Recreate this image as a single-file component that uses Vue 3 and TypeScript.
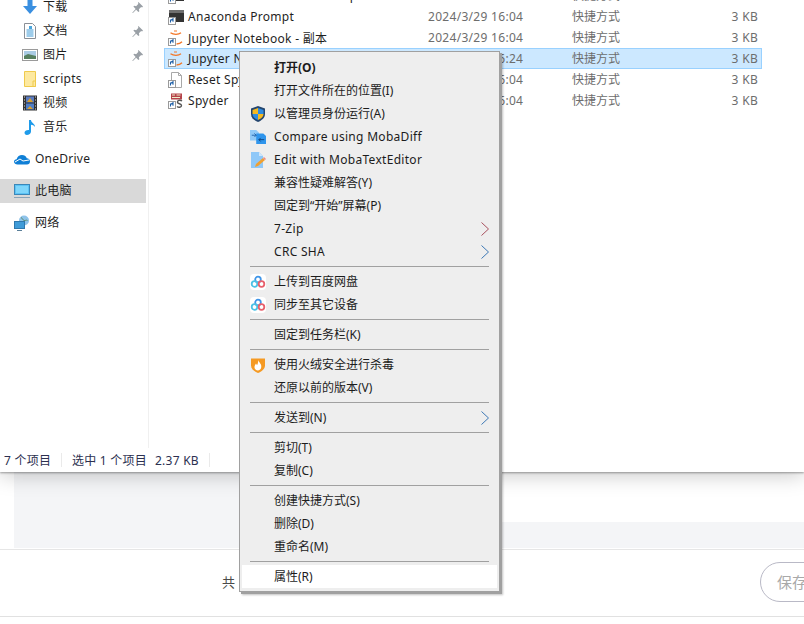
<script setup lang="ts">
type Item = { sep?: boolean; label?: string; icon?: string; bold?: boolean; arrow?: string; hover?: boolean }

const pinned = [
  { label: '下载', icon: 'download', pin: true },
  { label: '文档', icon: 'doc', pin: true },
  { label: '图片', icon: 'pic', pin: true },
  { label: 'scripts', icon: 'folder', pin: false },
  { label: '视频', icon: 'video', pin: false },
  { label: '音乐', icon: 'music', pin: false },
]

const files = [
  { name: 'Anaconda Powershell Prompt', date: '2024/3/29 16:04', icon: 'term', sel: false },
  { name: 'Anaconda Prompt', date: '2024/3/29 16:04', icon: 'term', sel: false },
  { name: 'Jupyter Notebook - 副本', date: '2024/3/29 16:04', icon: 'jup', sel: false },
  { name: 'Jupyter Notebook', date: '2024/3/29 16:24', icon: 'jup', sel: true },
  { name: 'Reset Spyder Settings', date: '2024/3/29 16:04', icon: 'blank', sel: false },
  { name: 'Spyder', date: '2024/3/29 16:04', icon: 'spy', sel: false },
]

const menu: Item[] = [
  { label: '打开(O)', bold: true },
  { label: '打开文件所在的位置(I)' },
  { label: '以管理员身份运行(A)', icon: 'shield' },
  { label: 'Compare using MobaDiff', icon: 'diff' },
  { label: 'Edit with MobaTextEditor', icon: 'edit' },
  { label: '兼容性疑难解答(Y)' },
  { label: '固定到“开始”屏幕(P)' },
  { label: '7-Zip', arrow: 'red' },
  { label: 'CRC SHA', arrow: 'blue' },
  { sep: true },
  { label: '上传到百度网盘', icon: 'baidu' },
  { label: '同步至其它设备', icon: 'baidu' },
  { sep: true },
  { label: '固定到任务栏(K)' },
  { sep: true },
  { label: '使用火绒安全进行杀毒', icon: 'fire' },
  { label: '还原以前的版本(V)' },
  { sep: true },
  { label: '发送到(N)', arrow: 'blue' },
  { sep: true },
  { label: '剪切(T)' },
  { label: '复制(C)' },
  { sep: true },
  { label: '创建快捷方式(S)' },
  { label: '删除(D)' },
  { label: '重命名(M)' },
  { sep: true },
  { label: '属性(R)', hover: true },
]

const isLatin = (s?: string) => /^[\x20-\x7e]+$/.test(s ?? '')
</script>

<template>
  <div class="page">
    <section class="explorer">
      <div class="panes">
        <nav class="side">
          <div class="side-scroll">
            <div v-for="p in pinned" :key="p.label" class="nav deep">
              <svg class="ico" viewBox="0 0 16 16">
                <g v-if="p.icon === 'download'">
                  <path d="M5.500 0h5v7h4.500L8 15 1 7h4.500z" fill="#3a8fe0" />
                </g>
                <g v-else-if="p.icon === 'doc'">
                  <path d="M2.500.5h8l3 3v12h-11z" fill="#fff" stroke="#8a8f96" />
                  <path d="M4.500 7h7M4.500 9h7M4.500 11h7M4.500 13h7" stroke="#3f9ad6" />
                  <path d="M7 3h3v3H7z" fill="#4ba6dd" />
                </g>
                <g v-else-if="p.icon === 'pic'">
                  <rect x="0.500" y="2.500" width="15" height="11" fill="#fff" stroke="#9a9a9a" />
                  <rect x="2" y="4" width="12" height="8" fill="#a9cbe4" />
                  <path d="M2 9l4-2 8 2v3H2z" fill="#567f5f" />
                </g>
                <g v-else-if="p.icon === 'folder'">
                  <path d="M2.500.5h11v15h-11z" fill="#fde9a0" stroke="#efca4c" />
                  <path d="M11 10h2.500v5.500H11z" fill="#fde9a0" stroke="#efca4c" />
                </g>
                <g v-else-if="p.icon === 'video'">
                  <rect x="1" y="0.500" width="14" height="15" fill="#333" />
                  <rect x="4" y="1.500" width="8" height="6" fill="#5a7bc0" />
                  <rect x="4" y="8.500" width="8" height="6" fill="#4f7ec8" />
                  <path d="M5 7l3-4 3 4zM5 14l3-3 3 3z" fill="#d9a02c" />
                  <path d="M2 2h1M2 5h1M2 8h1M2 11h1M2 14h1M13 2h1M13 5h1M13 8h1M13 11h1M13 14h1" stroke="#ddd" />
                </g>
                <g v-else>
                  <path d="M7 1h2c0 3 4 3.500 4 7-1-1.500-2.500-2-4-2.200V12.500C9 14.500 7 16 4.800 16 3.400 16 2.500 15 2.500 13.800c0-1.700 2-3 4.500-2.700z" fill="#1f9bea" />
                </g>
              </svg>
              <span class="nav-label">{{ p.label }}</span>
              <svg v-if="p.pin" class="pin" viewBox="0 0 12 12">
                <path d="M7 0l5 5-1 1-1-.5-2.500 2.500.5 2-1 1L4.500 8.500 1 12H.5v-.5L4 7.500 1.500 5l1-1 2 .5L7 2 6.500 1z" fill="#9aa0a6" />
              </svg>
            </div>
          </div>

          <div class="nav group">
            <svg class="ico" viewBox="0 0 16 16">
              <path d="M3.500 13.500C1.500 13.500 0 12.300 0 10.800c0-1.500 1.100-2.500 2.600-2.600C3.300 5.600 5.500 4 8 4c2.200 0 4 1.200 4.800 3.200 1.900 0 3.200 1.500 3.200 3.200s-1.300 3.100-3 3.100z" fill="#0f7fd6" />
              <path d="M1 11l5-3 3 2 6-1" stroke="#fff" stroke-width="1" fill="none" />
            </svg>
            <span class="nav-label">OneDrive</span>
          </div>
          <div class="nav group current">
            <svg class="ico" viewBox="0 0 16 16">
              <rect x="0.500" y="1.500" width="15" height="10" fill="#5cc3f5" stroke="#3b87b8" />
              <rect x="2" y="3" width="12" height="7" fill="#7fd6fb" />
              <path d="M0 14.500h16" stroke="#8aa4b8" />
            </svg>
            <span class="nav-label">此电脑</span>
          </div>
          <div class="nav group">
            <svg class="ico" viewBox="0 0 16 16">
              <circle cx="10" cy="5.500" r="5" fill="#8fc3ea" />
              <path d="M7 2.500c2 1 1.500 2.500 3 3s2-1 3.500 0" stroke="#5b8f72" fill="none" />
              <rect x="0.500" y="6.500" width="10" height="7" fill="#3f9bd8" stroke="#2f78ad" />
              <path d="M3 15.500h5" stroke="#5a7f99" />
            </svg>
            <span class="nav-label">网络</span>
          </div>
        </nav>

        <div class="list">
          <div class="rows">
            <div v-for="f in files" :key="f.name" class="row" :class="{ sel: f.sel }">
              <svg class="file-ico" viewBox="0 0 16 16">
                <g v-if="f.icon === 'term'">
                  <rect x="1" y="1" width="15" height="12" fill="#333" />
                  <rect x="1" y="1" width="15" height="3" fill="#6f6f6f" />
                </g>
                <g v-else-if="f.icon === 'jup'">
                  <path d="M2.500 2.800c3 2 8 2 10.500 0" stroke="#f37626" stroke-width="1.300" fill="none" />
                  <path d="M6 1h3" stroke="#f37626" />
                  <path d="M8.500 14c2 0 4-.5 5.500-2.200" stroke="#f37626" stroke-width="1.300" fill="none" />
                </g>
                <g v-else-if="f.icon === 'blank'">
                  <path d="M3.500.5h7l3 3v12h-10z" fill="#fff" stroke="#a8a8a8" />
                  <path d="M10.500.5v3h3" fill="none" stroke="#a8a8a8" />
                </g>
                <g v-else>
                  <rect x="3" y="0.500" width="11" height="6" fill="#b5434a" />
                  <path d="M4 2h3M8.500 2h4M4 4.500h8" stroke="#eec" />
                  <path d="M14 8c-2-1.500-5-.5-4.500 1.500.4 1.500 4 1 4 3s-3 2.300-4.500 1" stroke="#555" stroke-width="1.400" fill="none" />
                </g>
                <g>
                  <rect x="0.500" y="8.500" width="7" height="7" fill="#fff" stroke="#9a9a9a" />
                  <path d="M2.500 13.500V11H5M2.800 11.200L5 9.800v3" fill="none" stroke="#1d5fa8" stroke-width="1.100" />
                </g>
              </svg>
              <span class="name">{{ f.name }}</span>
              <span class="date">{{ f.date }}</span>
              <span class="type">快捷方式</span>
              <span class="size">3 KB</span>
            </div>
          </div>
        </div>
      </div>

      <footer class="status">
        <span class="st-count">7 个项目</span>
        <i class="st-bar"></i>
        <span class="st-sel">选中 1 个项目</span>
        <span class="st-size">2.37 KB</span>
        <i class="st-bar"></i>
      </footer>
    </section>

    <div class="content">
      <div class="gutter"></div>
      <div class="canvas"><div class="card"></div></div>
    </div>

    <div class="actions">
      <span class="total">共</span>
      <button class="save">保存</button>
    </div>

    <div class="menu">
      <template v-for="(m, i) in menu" :key="i">
        <div v-if="m.sep" class="sep"></div>
        <div v-else class="item" :class="{ bold: m.bold, hover: m.hover, latin: isLatin(m.label) }">
          <span class="mi">
            <svg v-if="m.icon === 'shield'" viewBox="0 0 16 16">
              <path d="M8 0l7 2.500v5.500c0 4-3.500 6.500-7 8-3.500-1.500-7-4-7-8V2.500z" fill="#24466f" />
              <path d="M8 2L2.500 4v4H8zM8 8v6c2.500-1 5.500-3 5.500-6z" fill="#f5b921" />
              <path d="M8 2v6h5.500V4zM8 8H2.500c0 3 3 5 5.500 6z" fill="#2f8ce0" />
            </svg>
            <svg v-else-if="m.icon === 'diff'" viewBox="0 0 18 16">
              <path d="M0 0h7l3 3v9H0z" fill="#90c9f7" />
              <path d="M7 4h8l3 3v9H7z" fill="#2f95ec" />
              <path d="M2 6h5M5 4l2 2-2 2" stroke="#1d5fa8" fill="none" />
              <path d="M16 11h-6M12 9l-2 2 2 2" stroke="#0c3d78" fill="none" />
            </svg>
            <svg v-else-if="m.icon === 'edit'" viewBox="0 0 16 16">
              <path d="M1 0h8l4 4v12H1z" fill="#8fc8f8" />
              <path d="M9 0v4h4z" fill="#cfe6fb" />
              <path d="M5 15l1-3 7-6 2 2-7 6z" fill="#f0a030" />
              <path d="M13 6l2 2 1-1-2-2z" fill="#e88" />
            </svg>
            <svg v-else-if="m.icon === 'baidu'" viewBox="0 0 16 16">
              <rect width="16" height="16" rx="4" fill="#fff" />
              <circle cx="8" cy="5.500" r="2.800" fill="none" stroke="#3f95e8" stroke-width="1.800" />
              <circle cx="4.500" cy="10" r="2.800" fill="none" stroke="#4cc2e6" stroke-width="1.800" />
              <circle cx="11.500" cy="10" r="2.800" fill="none" stroke="#e8606c" stroke-width="1.800" />
            </svg>
            <svg v-else-if="m.icon === 'fire'" viewBox="0 0 16 16">
              <path d="M1 1.500h14v7c0 3.500-3.500 6-7 7.500-3.500-1.500-7-4-7-7.500z" fill="#f59a23" />
              <path d="M8 3c1 2.500 4 4 3.200 7.500C10.700 12.800 9 13.500 8 13.500c-2 0-3.500-1.500-3.500-3.500 0-1.500 1-2.500 1.500-3.500.5.700.8 1.200 1 1.800C7.800 7 8.300 5 8 3z" fill="#fff" />
            </svg>
          </span>
          <span class="ml">{{ m.label }}</span>
          <svg v-if="m.arrow" class="chev" :class="m.arrow" viewBox="0 0 8 14">
            <path d="M0.500 0.500L7.500 7 0.500 13.500" fill="none" stroke="currentColor" />
          </svg>
        </div>
      </template>
    </div>
  </div>
</template>

<style>
html, body { margin: 0; background: #fff; }
</style>

<style scoped>
.page {
  position: relative;
  width: 804px;
  height: 624px;
  overflow: hidden;
  background: #fff;
  display: flex;
  flex-direction: column;
  font-family: "Noto Sans", "Noto Sans CJK SC", sans-serif;
  font-size: 12px;
  color: #1f1f1f;
}

.explorer {
  position: relative;
  z-index: 1;
  height: 472px;
  flex: none;
  display: flex;
  flex-direction: column;
  background: #fff;
  box-shadow: 0 1px 2px rgba(0, 0, 0, .35), 0 3px 20px rgba(0, 0, 0, .22);
}
.panes { flex: 1; display: flex; min-height: 0; }

.side { width: 148px; flex: none; border-right: 1px solid #f0f0f0; overflow: hidden; }
.side-scroll { margin-top: -5px; }
.nav { height: 24px; display: flex; align-items: center; width: 146px; }
.nav.deep { padding-left: 22px; box-sizing: border-box; }
.nav.group { margin-top: 8px; padding-left: 14px; box-sizing: border-box; }
.nav.current { background: #d9d9d9; }
.ico { width: 16px; height: 16px; flex: none; margin-right: 5px; }
.nav-label { flex: 1; letter-spacing: .25px; margin-top: -2px; }
.pin { width: 11px; height: 11px; flex: none; margin-right: 3px; }

.list { flex: 1; min-width: 0; overflow: hidden; padding-left: 15px; }
.rows { margin-top: -15px; width: 598px; }
.row {
  height: 21px;
  box-sizing: border-box;
  display: flex;
  align-items: center;
  padding-left: 3px;
  border: 1px solid transparent;
  letter-spacing: .3px;
}
.row.sel { background: #cce8ff; border-color: #99d1ff; }
.file-ico { width: 16px; height: 16px; flex: none; margin-right: 4px; }
.name { width: 240px; flex: none; white-space: nowrap; }
.date { width: 144px; flex: none; color: #6d6d6d; }
.type { flex: 1; color: #6d6d6d; margin-top: -2px; letter-spacing: 0; }
.size { color: #6d6d6d; margin-right: 3px; }

.status {
  height: 24px;
  flex: none;
  display: flex;
  align-items: center;
  padding-left: 4px;
  color: #2c3050;
  letter-spacing: .25px;
}
.st-bar { width: 1px; height: 14px; background: #eaeaea; }
.st-count { width: 57px; }
.st-sel { margin-left: 10px; width: 83px; }
.st-size { width: 54px; }

.content { height: 76px; flex: none; display: flex; }
.gutter { width: 14px; flex: none; background: #fff; border-radius: 0 0 4px 0; }
.canvas { flex: 1; background: #f4f5f7; }
.card { height: 50px; margin-left: 400px; background: #fff; }

.actions {
  height: 68px;
  flex: none;
  border-top: 1px solid #e6e6e6;
  border-bottom: 1px solid #e1e1e1;
  display: flex;
  align-items: center;
  padding-left: 222px;
  padding-bottom: 2px;
  box-sizing: border-box;
  margin-top: 1px;
}
.total { color: #4a4a4a; font-size: 13px; margin-top: -2px; }
.save {
  margin-left: 525px;
  width: 100px;
  height: 40px;
  flex: none;
  border: 1px solid #b9b9c6;
  border-radius: 20px;
  background: #fff;
  padding: 0 0 2px 16px;
  text-align: left;
  color: #a9a9a9;
  font-family: inherit;
  font-size: 15px;
}

.menu {
  position: absolute;
  z-index: 2;
  left: 239px;
  top: 51px;
  width: 261px;
  height: 541px;
  box-sizing: border-box;
  padding: 4px 2px 3px;
  background: #eeeeee;
  border: 1px solid #a0a0a0;
  box-shadow: 2px 2px 0 #a0a0a0, 3px 3px 2px rgba(0, 0, 0, .25);
}
.item { height: 23px; display: flex; align-items: center; color: #1c1c1c; }
.item.latin { letter-spacing: .3px; }
.item.bold { font-weight: 700; }
.item.hover { background: #fff; }
.mi { width: 32px; flex: none; display: flex; padding-left: 8px; box-sizing: border-box; }
.mi svg { width: 16px; height: 16px; display: block; }
.ml { flex: 1; white-space: nowrap; margin-top: -2px; }
.item.latin .ml { margin-top: 0; }
.chev { width: 8px; height: 14px; flex: none; margin-right: 8px; }
.chev.red { color: #a8505e; }
.chev.blue { color: #3d78b5; }
.sep { height: 7px; box-sizing: border-box; padding-top: 3px; margin: 0 8px 0 8px; }
.sep::before { content: ""; display: block; height: 1px; background: #a0a0a0; }
</style>
